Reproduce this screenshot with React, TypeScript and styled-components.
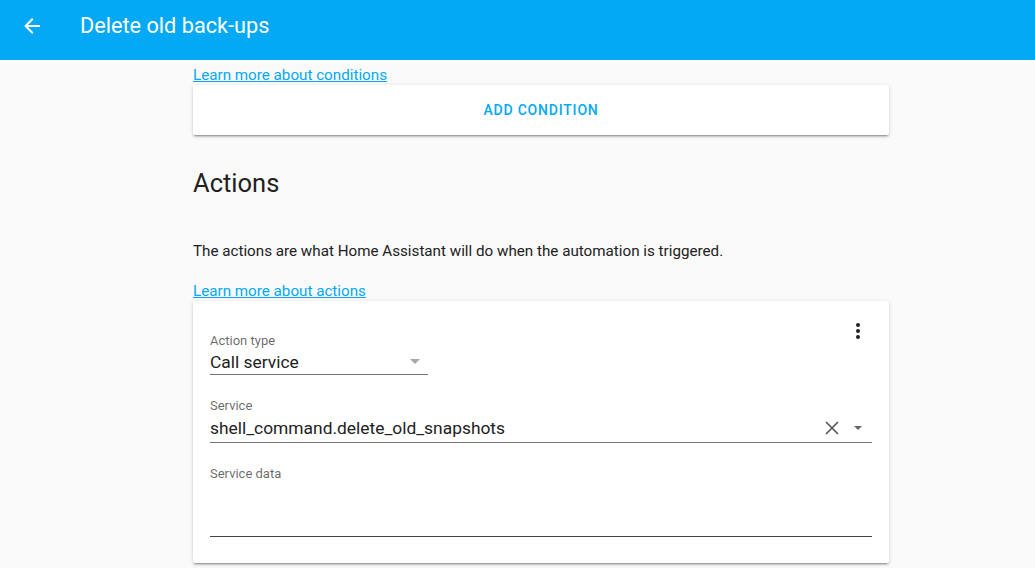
import React from "react";
import styled, { createGlobalStyle } from "styled-components";

const Global = createGlobalStyle`
  html, body { margin: 0; padding: 0; background: #fafafa; }
  body { font-family: Roboto, "Noto Sans", "Liberation Sans", sans-serif; color: #212121; -webkit-font-smoothing: antialiased; }
  * { box-sizing: border-box; }
`;

const Page = styled.div`
  width: 1035px;
  height: 568px;
  overflow: hidden;
  background: #fafafa;
`;

const Toolbar = styled.header`
  height: 60px;
  background: #03a9f4;
  color: #fff;
  display: flex;
  align-items: center;
  padding-left: 20px;
`;

const IconButton = styled.button`
  width: 24px;
  height: 24px;
  padding: 0;
  border: 0;
  background: none;
  color: inherit;
  display: flex;
  align-items: center;
  justify-content: center;
  margin-top: -9px;
`;

const Title = styled.h1`
  margin: -9px 0 0 36px;
  font-size: 21.7px;
  font-weight: 400;
  line-height: 24px;
`;

const Content = styled.main`
  width: 696px;
  margin-left: 193px;
  padding-top: 5px;
`;

const Link = styled.a`
  display: block;
  width: max-content;
  font-size: 15.2px;
  line-height: 20px;
  color: #03a9f4;
  text-decoration: underline;
  cursor: pointer;
`;

const Card = styled.div<{ $pad?: string }>`
  position: relative;
  background: #fff;
  border-radius: 2px;
  box-shadow: 0 2px 2px 0 rgba(0,0,0,.14), 0 1px 5px 0 rgba(0,0,0,.12), 0 3px 1px -2px rgba(0,0,0,.2);
  padding: ${(p) => p.$pad || "0"};
`;

const ButtonCard = styled(Card)`
  height: 50px;
  display: flex;
  align-items: center;
  justify-content: center;
`;

const TextButton = styled.button`
  border: 0;
  background: none;
  font-family: inherit;
  font-size: 14px;
  font-weight: 500;
  letter-spacing: 0.8px;
  color: #03a9f4;
  text-transform: uppercase;
  padding: 0 8px;
  margin-left: 0;
`;

const Heading = styled.h2`
  margin: 32px 0 0;
  font-size: 25.5px;
  font-weight: 400;
  line-height: 32px;
  color: #212121;
`;

const Description = styled.p`
  margin: 42px 0 0;
  font-size: 15.2px;
  line-height: 20px;
  color: #212121;
`;

const ActionsLink = styled(Link)`
  margin-top: 21px;
  line-height: 19px;
`;

const MenuButton = styled.div`
  position: absolute;
  top: 18px;
  right: 19px;
  width: 24px;
  height: 24px;
  color: #212121;
`;

const Field = styled.div<{ $width?: string; $mt: number }>`
  width: ${(p) => p.$width || "100%"};
  margin-top: ${(p) => p.$mt}px;
`;

const Label = styled.div`
  font-size: 13px;
  line-height: 16px;
  color: rgba(0,0,0,0.6);
`;

const InputRow = styled.div<{ $height?: number; $dark?: boolean }>`
  display: flex;
  align-items: center;
  height: ${(p) => p.$height || 26}px;
  border-bottom: 1px solid ${(p) => (p.$dark ? "#444" : "#737373")};
  font-size: 17.4px;
  color: #212121;
`;

const Value = styled.span`
  flex: 1;
  line-height: 24px;
`;

const Tri = styled.span<{ $c: string; $w: number }>`
  width: 0;
  height: 0;
  border-left: ${(p) => p.$w / 2}px solid transparent;
  border-right: ${(p) => p.$w / 2}px solid transparent;
  border-top: ${(p) => p.$w / 2}px solid ${(p) => p.$c};
  margin-right: ${(p) => (p.$w === 10 ? 8 : 10)}px;
`;

const ClearIcon = styled.svg`
  width: 16px;
  height: 16px;
  margin-right: 14px;
`;

export default function App() {
  return (
    <Page>
      <Global />
      <Toolbar>
        <IconButton aria-label="back">
          <svg width="24" height="24" viewBox="0 0 24 24">
            <path fill="currentColor" d="M20,11V13H8L13.5,18.5L12.08,19.92L4.16,12L12.08,4.08L13.5,5.5L8,11H20Z" />
          </svg>
        </IconButton>
        <Title>Delete old back-ups</Title>
      </Toolbar>
      <Content>
        <Link>Learn more about conditions</Link>
        <ButtonCard>
          <TextButton>Add condition</TextButton>
        </ButtonCard>
        <Heading>Actions</Heading>
        <Description>The actions are what Home Assistant will do when the automation is triggered.</Description>
        <ActionsLink>Learn more about actions</ActionsLink>
        <Card $pad="32px 17px 26px 17px">
          <MenuButton>
            <svg width="24" height="24" viewBox="0 0 24 24">
              <path fill="currentColor" d="M12,16A2,2 0 0,1 14,18A2,2 0 0,1 12,20A2,2 0 0,1 10,18A2,2 0 0,1 12,16M12,10A2,2 0 0,1 14,12A2,2 0 0,1 12,14A2,2 0 0,1 10,12A2,2 0 0,1 12,10M12,4A2,2 0 0,1 14,6A2,2 0 0,1 12,8A2,2 0 0,1 10,6A2,2 0 0,1 12,4Z" />
            </svg>
          </MenuButton>
          <Field $width="218px" $mt={0}>
            <Label>Action type</Label>
            <InputRow $height={26}>
              <Value>Call service</Value>
              <Tri $c="#a8a8a8" $w={10} />
            </InputRow>
          </Field>
          <Field $mt={23}>
            <Label>Service</Label>
            <InputRow $height={29}>
              <Value>shell_command.delete_old_snapshots</Value>
              <ClearIcon viewBox="0 0 16 16">
                <path d="M2 2L14 14M14 2L2 14" stroke="#555" strokeWidth="1.6" fill="none" />
              </ClearIcon>
              <Tri $c="#666" $w={9} />
            </InputRow>
          </Field>
          <Field $mt={23}>
            <Label>Service data</Label>
            <InputRow $height={55} $dark />
          </Field>
        </Card>
      </Content>
    </Page>
  );
}
